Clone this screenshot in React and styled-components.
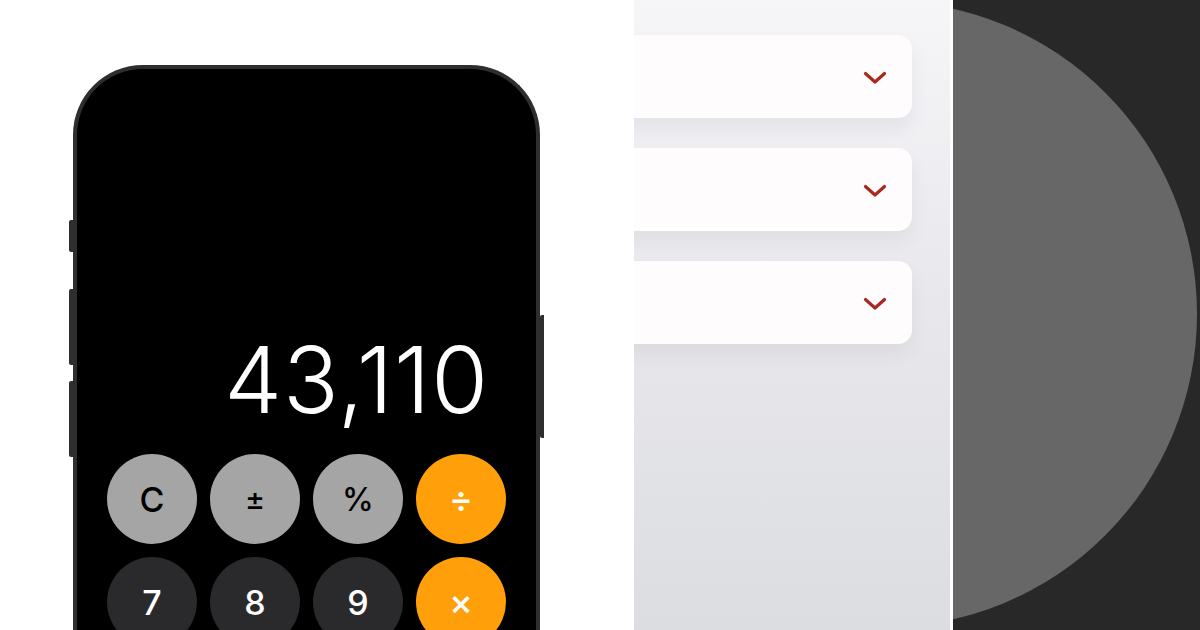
import React from "react";
import styled, { createGlobalStyle } from "styled-components";

const GlobalStyle = createGlobalStyle`
  html, body {
    margin: 0;
    padding: 0;
    background: #ffffff;
  }
  body {
    font-family: Inter, "Liberation Sans", sans-serif;
  }
`;

const Page = styled.div`
  display: flex;
  width: 1200px;
  height: 630px;
  overflow: hidden;
`;

const PhonePanel = styled.div`
  width: 634px;
  flex-shrink: 0;
  background: #ffffff;
  padding: 65px 0 0 73px;
  box-sizing: border-box;
  overflow: hidden;
`;

const Phone = styled.div`
  position: relative;
  width: 467px;
  height: 640px;
  box-sizing: border-box;
  border: 4px solid #2e2e2e;
  border-bottom: none;
  border-radius: 70px 70px 0 0;
  background: #000000;
  display: flex;
  flex-direction: column;
  padding: 0 30px 0 30px;
`;

const SideButton = styled.div`
  position: absolute;
  width: 4px;
  border-radius: 2px 0 0 2px;
  background: #2e2e2e;
  top: ${(props) => props.$top}px;
  height: ${(props) => props.$height}px;
  ${(props) => (props.$right ? "right: -8px;" : "left: -8px;")}
`;

const Display = styled.div`
  margin-top: 237px;
  height: 120px;
  display: flex;
  align-items: flex-end;
  justify-content: flex-end;
  padding-right: 17px;
  color: #ffffff;
  font-family: Inter, "Liberation Sans", sans-serif;
  font-weight: 300;
  font-size: 92px;
  line-height: 1;
  letter-spacing: 1px;
`;

const Keypad = styled.div`
  margin-top: 28px;
  display: grid;
  grid-template-columns: repeat(4, 90px);
  gap: 13px;
`;

const KEY_COLORS = {
  gray: { bg: "#a5a5a5", fg: "#000000" },
  dark: { bg: "#2a2a2c", fg: "#ffffff" },
  orange: { bg: "#ff9f0a", fg: "#ffffff" },
};

const Key = styled.div`
  width: 90px;
  height: 90px;
  border-radius: 50%;
  display: flex;
  align-items: center;
  justify-content: center;
  background: ${(props) => KEY_COLORS[props.$kind].bg};
  color: ${(props) => KEY_COLORS[props.$kind].fg};
  font-family: Inter, "Liberation Sans", sans-serif;
  font-size: ${(props) => props.$size || 34}px;
  font-weight: 500;
`;

const ListPanel = styled.div`
  width: 316px;
  flex-shrink: 0;
  background: linear-gradient(180deg, #f6f5f8 0%, #e9e9ed 45%, #dcdde1 100%);
  padding: 35px 38px 0 0;
  box-sizing: border-box;
  overflow: hidden;
  display: flex;
  flex-direction: column;
  gap: 30px;
`;

const Card = styled.div`
  box-sizing: border-box;
  height: 83px;
  margin-left: -30px;
  border-radius: 14px;
  background: #fffcfd;
  box-shadow: 0 10px 18px rgba(60, 60, 80, 0.07);
  display: flex;
  align-items: center;
  justify-content: flex-end;
  padding: 2px 25px 0 0;
`;

const Divider = styled.div`
  width: 3px;
  flex-shrink: 0;
  background: #ffffff;
`;

const ShapePanel = styled.div`
  flex: 1;
  background: #282828;
  overflow: hidden;
`;

function Chevron() {
  return (
    <svg width="24" height="14" viewBox="0 0 24 14">
      <polyline
        points="2.5,2.5 12,11 21.5,2.5"
        fill="none"
        stroke="#a8291d"
        strokeWidth="3.2"
        strokeLinecap="round"
        strokeLinejoin="round"
      />
    </svg>
  );
}

const keys = [
  { label: "C", kind: "gray" },
  { label: "±", kind: "gray", size: 30 },
  { label: "%", kind: "gray", size: 32 },
  { label: "÷", kind: "orange", size: 36 },
  { label: "7", kind: "dark" },
  { label: "8", kind: "dark" },
  { label: "9", kind: "dark" },
  { label: "×", kind: "orange", size: 36 },
];

export default function App() {
  return (
    <>
      <GlobalStyle />
      <Page>
        <PhonePanel>
          <Phone>
            <SideButton $top={151} $height={32} />
            <SideButton $top={220} $height={76} />
            <SideButton $top={312} $height={76} />
            <SideButton $right $top={246} $height={123} />
            <Display>43,110</Display>
            <Keypad>
              {keys.map((key) => (
                <Key key={key.label} $kind={key.kind} $size={key.size}>
                  {key.label}
                </Key>
              ))}
            </Keypad>
          </Phone>
        </PhonePanel>
        <ListPanel>
          <Card>
            <Chevron />
          </Card>
          <Card>
            <Chevron />
          </Card>
          <Card>
            <Chevron />
          </Card>
        </ListPanel>
        <Divider />
        <ShapePanel>
          <svg width="247" height="630" viewBox="0 0 247 630">
            <circle cx="-69" cy="314" r="313" fill="#676767" />
          </svg>
        </ShapePanel>
      </Page>
    </>
  );
}
